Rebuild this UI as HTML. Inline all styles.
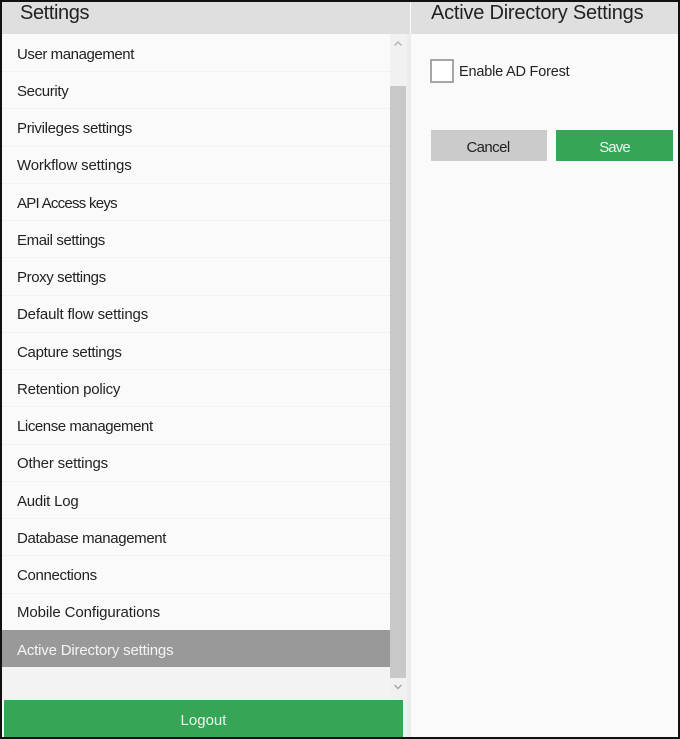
<!DOCTYPE html>
<html>
<head>
<meta charset="utf-8">
<style>
html,body{margin:0;padding:0;background:#fff}
#p{position:relative;width:680px;height:739px;overflow:hidden;background:#fafafa;font-family:"Liberation Sans",sans-serif;color:#222}
#p div{position:absolute;box-sizing:border-box}
.t{white-space:nowrap;font-size:15px;line-height:20px;left:17px}
.l{left:2px;width:388px;height:1px;background:#f2f2f2}
</style>
</head>
<body>
<div id="p">
<div style="left:0;top:0;width:410px;height:34px;background:#dfdfdf"></div>
<div style="left:411px;top:0;width:269px;height:34px;background:#dfdfdf"></div>
<div style="left:2px;top:34px;width:388px;height:633px;background:#fafafa"></div>
<div style="left:2px;top:667px;width:401px;height:33px;background:#f3f3f3"></div>
<div style="left:390px;top:34px;width:17px;height:666px;background:#f1f1f1"></div>
<div style="left:403px;top:667px;width:4px;height:72px;background:#f1f1f1"></div>
<div style="left:407px;top:34px;width:4px;height:705px;background:#ececec"></div>
<div style="left:390px;top:86px;width:16px;height:592px;background:#c8c8c8"></div>
<svg style="position:absolute;left:390px;top:36px" width="16" height="14"><path d="M4.500 9.500L8 6l3.500 3.500" fill="none" stroke="#b5b5b5" stroke-width="1.500"/></svg>
<svg style="position:absolute;left:390px;top:680px" width="16" height="14"><path d="M4.500 5L8 8.500 11.500 5" fill="none" stroke="#a8a8a8" stroke-width="1.500"/></svg>

<div class="t" style="left:20px;top:1px;font-size:20px;line-height:24px;letter-spacing:-.4px">Settings</div>
<div class="t" style="left:431px;top:1px;font-size:20px;line-height:24px;letter-spacing:-.22px">Active Directory Settings</div>

<div class="l" style="top:71px"></div>
<div class="l" style="top:108px"></div>
<div class="l" style="top:146px"></div>
<div class="l" style="top:183px"></div>
<div class="l" style="top:220px"></div>
<div class="l" style="top:257px"></div>
<div class="l" style="top:295px"></div>
<div class="l" style="top:332px"></div>
<div class="l" style="top:369px"></div>
<div class="l" style="top:406px"></div>
<div class="l" style="top:444px"></div>
<div class="l" style="top:481px"></div>
<div class="l" style="top:518px"></div>
<div class="l" style="top:555px"></div>
<div class="l" style="top:593px"></div>

<div class="t" style="top:45px;letter-spacing:-.43px">User management</div>
<div class="t" style="top:82px;letter-spacing:-.35px">Security</div>
<div class="t" style="top:119px;letter-spacing:-.31px">Privileges settings</div>
<div class="t" style="top:156px;letter-spacing:-.16px">Workflow settings</div>
<div class="t" style="top:194px;letter-spacing:-.73px">API Access keys</div>
<div class="t" style="top:231px;letter-spacing:-.39px">Email settings</div>
<div class="t" style="top:268px;letter-spacing:-.39px">Proxy settings</div>
<div class="t" style="top:305px;letter-spacing:-.15px">Default flow settings</div>
<div class="t" style="top:343px;letter-spacing:-.29px">Capture settings</div>
<div class="t" style="top:380px;letter-spacing:-.22px">Retention policy</div>
<div class="t" style="top:417px;letter-spacing:-.43px">License management</div>
<div class="t" style="top:454px;letter-spacing:-.17px">Other settings</div>
<div class="t" style="top:492px;letter-spacing:-.21px">Audit Log</div>
<div class="t" style="top:529px;letter-spacing:-.36px">Database management</div>
<div class="t" style="top:566px;letter-spacing:-.33px">Connections</div>
<div class="t" style="top:603px;letter-spacing:-.1px">Mobile Configurations</div>
<div style="left:2px;top:630px;width:388px;height:37px;background:#999"></div>
<div class="t" style="top:641px;color:#f4f4f4;letter-spacing:-.18px">Active Directory settings</div>

<div style="left:4px;top:700px;width:399px;height:39px;background:#34a656"></div>
<div class="t" style="left:4px;width:399px;text-align:center;top:711px;color:#f2f2f2">Logout</div>

<div style="left:430px;top:59px;width:24px;height:24px;background:#fff;border:2px solid #a6a6a6"></div>
<div class="t" style="left:459px;top:62px;font-size:14.500px;letter-spacing:-.2px">Enable AD Forest</div>
<div style="left:431px;top:130px;width:116px;height:31px;background:#cbcbcb"></div>
<div class="t" style="left:431px;width:114px;text-align:center;top:138px;letter-spacing:-.6px">Cancel</div>
<div style="left:556px;top:130px;width:117px;height:31px;background:#34a656"></div>
<div class="t" style="left:556px;width:117px;text-align:center;top:138px;color:#f2f2f2;letter-spacing:-.9px">Save</div>

<div style="left:0;top:0;width:2px;height:739px;background:#111"></div>
<div style="left:678px;top:0;width:2px;height:739px;background:#111"></div>
<div style="left:0;top:0;width:680px;height:2px;background:#111"></div>
<div style="left:0;top:737px;width:680px;height:2px;background:#111"></div>
</div>
</body>
</html>
